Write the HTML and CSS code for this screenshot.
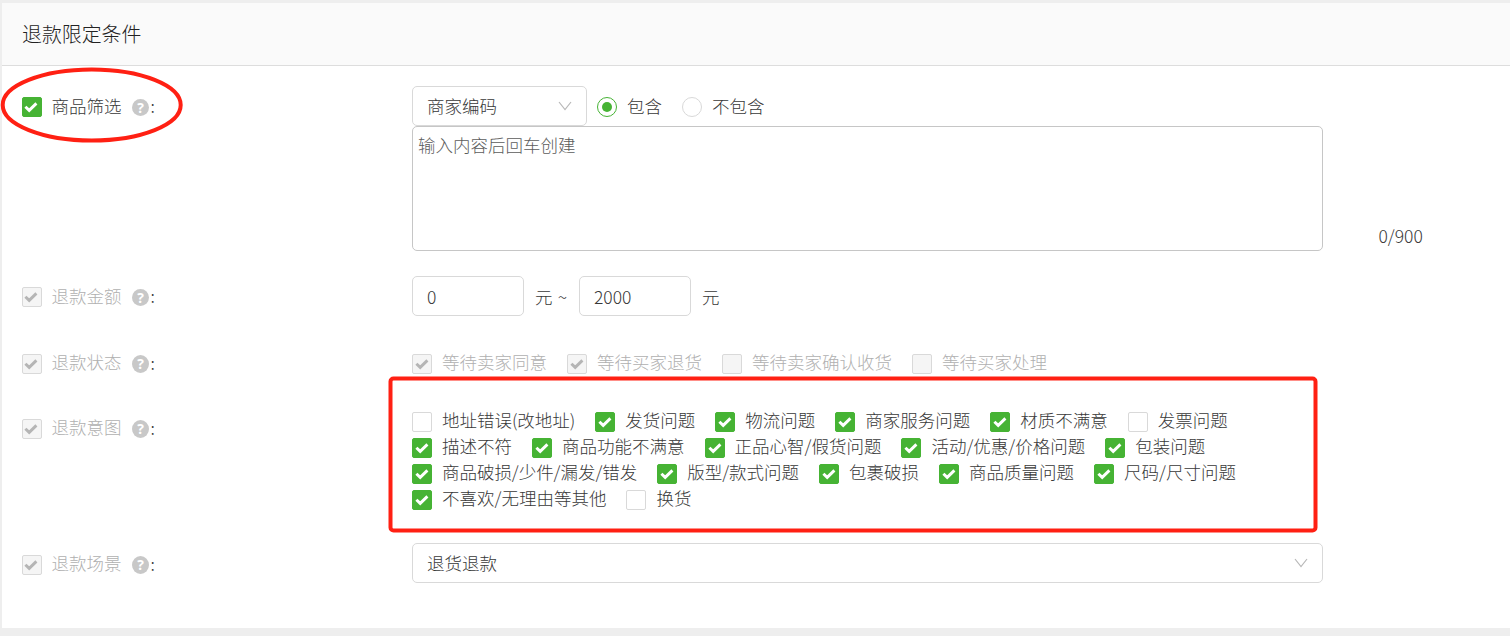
FILE: index.html
```
<!DOCTYPE html>
<html lang="zh-CN">
<head>
<meta charset="utf-8">
<title>退款限定条件</title>
<link rel="stylesheet" href="styles.css">
</head>
<body>
<svg class="sprite" aria-hidden="true">
  <symbol id="tick" viewBox="0 0 20 20"><path d="M4.4 9.7 L8.2 13.4 L15.4 6.4" fill="none" stroke="currentColor" stroke-width="2.9"/></symbol>
  <symbol id="arrow" viewBox="0 0 14 10"><path d="M1 1 L7 8.6 L13 1" fill="none" stroke="currentColor" stroke-width="1.2"/></symbol>
</svg>
<main class="panel">
  <h1 class="panel-title">退款限定条件</h1>
  <div class="form">
    <section class="row row-goods">
      <div class="label"><span class="box on"><svg><use href="#tick"/></svg></span><span class="name">商品筛选</span><span class="help">?</span><span class="colon">:</span></div>
      <div class="control goods">
        <div class="goods-top">
          <div class="select select-small"><span>商家编码</span><svg class="arrow"><use href="#arrow"/></svg></div>
          <span class="radio checked"></span><span class="radio-text">包含</span>
          <span class="radio"></span><span class="radio-text">不包含</span>
        </div>
        <div class="textarea">输入内容后回车创建</div>
      </div>
      <div class="counter">0/900</div>
    </section>
    <section class="row row-amount">
      <div class="label off"><span class="box dim"><svg><use href="#tick"/></svg></span><span class="name">退款金额</span><span class="help">?</span><span class="colon">:</span></div>
      <div class="control amount"><span class="input">0</span><span class="unit unit-from">元 ~</span><span class="input">2000</span><span class="unit">元</span></div>
    </section>
    <section class="row row-status">
      <div class="label off"><span class="box dim"><svg><use href="#tick"/></svg></span><span class="name">退款状态</span><span class="help">?</span><span class="colon">:</span></div>
      <div class="control checks off">
        <div class="line">
          <span class="item"><span class="box dim"><svg><use href="#tick"/></svg></span><span class="text">等待卖家同意</span></span>
          <span class="item"><span class="box dim"><svg><use href="#tick"/></svg></span><span class="text">等待买家退货</span></span>
          <span class="item"><span class="box dim"></span><span class="text">等待卖家确认收货</span></span>
          <span class="item"><span class="box dim"></span><span class="text">等待买家处理</span></span>
        </div>
      </div>
    </section>
    <section class="row row-intent">
      <div class="label off"><span class="box dim"><svg><use href="#tick"/></svg></span><span class="name">退款意图</span><span class="help">?</span><span class="colon">:</span></div>
      <div class="control checks">
        <div class="line">
          <span class="item"><span class="box"></span><span class="text tight">地址错误(改地址)</span></span>
          <span class="item"><span class="box on"><svg><use href="#tick"/></svg></span><span class="text">发货问题</span></span>
          <span class="item"><span class="box on"><svg><use href="#tick"/></svg></span><span class="text">物流问题</span></span>
          <span class="item"><span class="box on"><svg><use href="#tick"/></svg></span><span class="text">商家服务问题</span></span>
          <span class="item"><span class="box on"><svg><use href="#tick"/></svg></span><span class="text">材质不满意</span></span>
          <span class="item"><span class="box"></span><span class="text">发票问题</span></span>
        </div>
        <div class="line">
          <span class="item"><span class="box on"><svg><use href="#tick"/></svg></span><span class="text">描述不符</span></span>
          <span class="item"><span class="box on"><svg><use href="#tick"/></svg></span><span class="text">商品功能不满意</span></span>
          <span class="item"><span class="box on"><svg><use href="#tick"/></svg></span><span class="text">正品心智/假货问题</span></span>
          <span class="item"><span class="box on"><svg><use href="#tick"/></svg></span><span class="text">活动/优惠/价格问题</span></span>
          <span class="item"><span class="box on"><svg><use href="#tick"/></svg></span><span class="text">包装问题</span></span>
        </div>
        <div class="line">
          <span class="item"><span class="box on"><svg><use href="#tick"/></svg></span><span class="text snug">商品破损/少件/漏发/错发</span></span>
          <span class="item"><span class="box on"><svg><use href="#tick"/></svg></span><span class="text">版型/款式问题</span></span>
          <span class="item"><span class="box on"><svg><use href="#tick"/></svg></span><span class="text">包裹破损</span></span>
          <span class="item"><span class="box on"><svg><use href="#tick"/></svg></span><span class="text">商品质量问题</span></span>
          <span class="item"><span class="box on"><svg><use href="#tick"/></svg></span><span class="text">尺码/尺寸问题</span></span>
        </div>
        <div class="line">
          <span class="item"><span class="box on"><svg><use href="#tick"/></svg></span><span class="text">不喜欢/无理由等其他</span></span>
          <span class="item"><span class="box"></span><span class="text">换货</span></span>
        </div>
      </div>
    </section>
    <section class="row row-scene">
      <div class="label off"><span class="box dim"><svg><use href="#tick"/></svg></span><span class="name">退款场景</span><span class="help">?</span><span class="colon">:</span></div>
      <div class="control"><div class="select"><span>退货退款</span><svg class="arrow"><use href="#arrow"/></svg></div></div>
    </section>
  </div>
</main>
<svg class="marks" viewBox="0 0 1510 636" aria-hidden="true">
  <ellipse cx="91.7" cy="105" rx="89" ry="35.5"/>
  <rect x="390.5" y="378.5" width="925" height="152" rx="3"/>
</svg>
</body>
</html>
```
FILE: styles.css
```
* { box-sizing: border-box; }
body {
  margin: 0;
  height: 636px;
  padding: 3px 0 8px 2px;
  overflow: hidden;
  background: #eee;
  color: #383838;
  font: 300 17.5px/26px "Noto Sans CJK SC", sans-serif;
}
.sprite { display: none; }
.panel { height: 625px; background: #fff; }
.panel-title {
  margin: 0;
  height: 63px;
  padding-left: 20px;
  border-bottom: 1px solid #ddd;
  background: #fafafa;
  color: #222;
  font-size: 19.9px;
  font-weight: 300;
  line-height: 62px;
}
.form { padding: 20px 0 0 20px; }
.row { display: flex; align-items: flex-start; }
.row-goods { height: 165px; margin-bottom: 25px; }
.row-amount { height: 40px; margin-bottom: 35px; }
.row-status { height: 26px; margin-bottom: 32px; }
.row-intent { height: 104px; margin-bottom: 30px; }
.label { display: flex; align-items: center; width: 390px; height: 42px; }
.row-status .label { height: 26px; }
.row-intent .label { height: 40px; }
.row-scene .label { height: 44px; }
.label .box svg { margin-left: -2px; }
.name { margin: -2px 11px 0 9.5px; }
.row-status .name, .row-intent .name, .row-scene .name { margin-top: -4px; }
.off .name, .off .text { color: #b0b0b0; }
.help {
  width: 17px;
  height: 17px;
  margin-left: -0.5px;
  border-radius: 50%;
  background: #c8c8c8;
  color: #fff;
  font: bold 14px/17px "Open Sans", sans-serif;
  text-align: center;
}
.row-status .help, .row-intent .help, .row-scene .help { height: 18px; line-height: 17px; }
.colon { margin: -2px 0 0 1.5px; }
.box {
  flex: none;
  width: 20px;
  height: 20px;
  border: 1px solid #d9d9d9;
  border-radius: 2px;
  background: #fff;
}
.box svg { display: block; width: 20px; height: 20px; margin: -1px; }
.box.on { border-color: #46b334; background: #46b334; color: #fff; }
.box.dim { background: #f5f5f5; color: #b5b5b5; }
.control { width: 911px; }
.goods-top { display: flex; align-items: center; height: 40px; }
.select {
  display: flex;
  align-items: center;
  justify-content: space-between;
  height: 40px;
  padding: 0 14px;
  border: 1px solid #d9d9d9;
  border-radius: 5px;
}
.select-small { width: 175px; margin-right: 10px; }
.arrow { width: 14px; height: 10px; color: #b8b8b8; }
.radio {
  display: flex;
  width: 20px;
  height: 20px;
  margin-top: 2px;
  align-items: center;
  justify-content: center;
  border: 1px solid #d9d9d9;
  border-radius: 50%;
}
.radio.checked { border-color: #46b334; }
.radio.checked::before { content: ""; width: 10px; height: 10px; border-radius: 50%; background: #46b334; }
.radio-text { margin: 0 20px 0 10px; }
.textarea {
  height: 125px;
  padding: 5px;
  border: 1px solid #c6c6c6;
  border-radius: 5px;
  color: #5c5c5c;
}
.counter { margin: 137px 0 0 55.5px; }
.amount { display: flex; align-items: center; }
.input {
  width: 112px;
  height: 40px;
  padding-left: 14px;
  border: 1px solid #d9d9d9;
  border-radius: 5px;
  line-height: 40px;
}
.unit { margin: 1px 0 0 11px; }
.unit-from { width: 44px; word-spacing: 1.5px; }
.line { display: flex; align-items: center; height: 26px; }
.item { display: flex; align-items: center; margin-right: 20px; white-space: nowrap; }
.text { margin: -4px 0 0 10px; }
.tight { letter-spacing: -0.03px; }
.snug { letter-spacing: -0.04px; }
.marks {
  position: absolute;
  top: 0;
  left: 0;
  width: 1510px;
  height: 636px;
  fill: none;
  stroke: #ff2013;
  stroke-width: 4;
  pointer-events: none;
}
```
